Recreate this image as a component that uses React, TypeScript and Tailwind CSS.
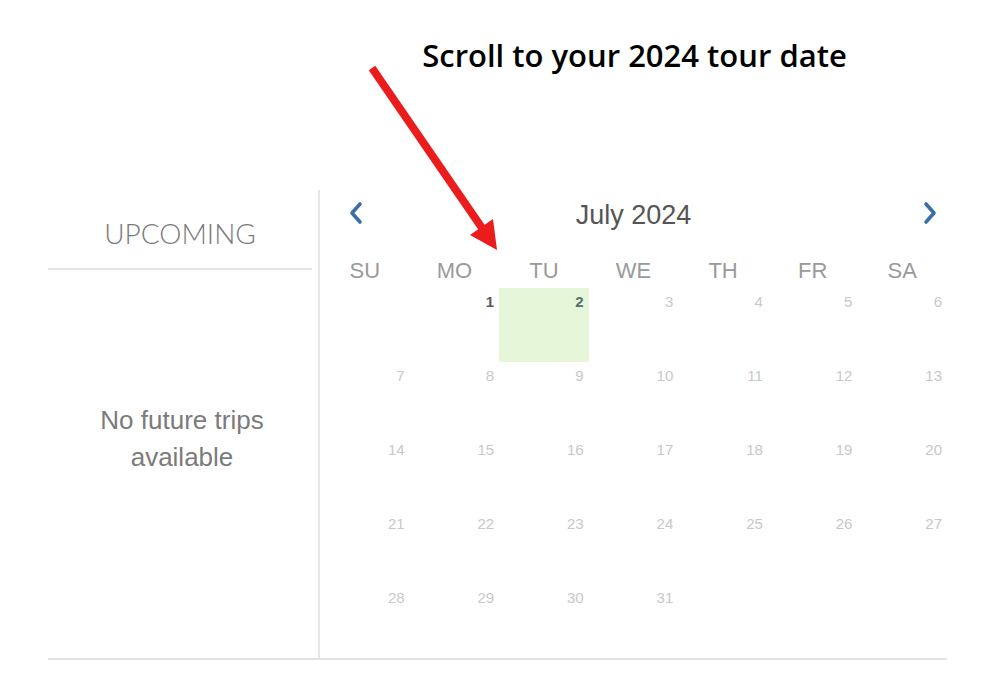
const rows: (number | null)[][] = [
  [null, 1, 2, 3, 4, 5, 6],
  [7, 8, 9, 10, 11, 12, 13],
  [14, 15, 16, 17, 18, 19, 20],
  [21, 22, 23, 24, 25, 26, 27],
  [28, 29, 30, 31, null, null, null],
];

const days = ["SU", "MO", "TU", "WE", "TH", "FR", "SA"];

const Chevron = ({ dir }: { dir: "left" | "right" }) => (
  <svg width="15" height="24" viewBox="0 0 15 24" fill="none">
    <path
      d={dir === "left" ? "M12 3 L4 12 L12 21" : "M3 3 L11 12 L3 21"}
      stroke="#3a6ea5"
      strokeWidth="3.6"
      strokeLinecap="round"
      strokeLinejoin="round"
    />
  </svg>
);

const App: React.FC = () => {
  return (
    <main className="relative w-[1000px] h-[682px] bg-white overflow-hidden font-['Liberation_Sans',Arial,sans-serif]">
      <div className="flex pt-[34px] pl-[320px] w-[949px]">
        <h1 className="flex-1 text-center font-['Open_Sans',sans-serif] font-semibold text-[31px] leading-[42px] text-black">
          Scroll to your 2024 tour date
        </h1>
      </div>

      <div className="flex ml-[48px] w-[899px] mt-[114px] border-b-2 border-[#e2e2e2]">
        {/* left column */}
        <div className="w-[272px] flex flex-col border-r-2 border-[#e6e6e6]">
          <div className="mr-[6px] h-[80px] pt-[8px] border-b-2 border-[#e4e4e4] flex items-center justify-center">
            <span className="font-['Lato',sans-serif] font-light text-[28px] text-[#7a7a7a]">UPCOMING</span>
          </div>
          <p className="pt-[132px] pr-[2px] text-center text-[26px] leading-[37px] text-[#7b7b7b]">
            No future trips
            <br />
            available
          </p>
        </div>

        {/* calendar */}
        <div className="flex-1">
          <div className="grid grid-cols-7 h-[46px] pt-[4px] items-center">
            <div className="pl-[28px] -mt-[4px]">
              <Chevron dir="left" />
            </div>
            <div className="col-span-5 text-center text-[27px] text-[#555]">July 2024</div>
            <div className="flex justify-end pr-[9px] -mt-[4px]">
              <Chevron dir="right" />
            </div>
          </div>
          <div className="grid grid-cols-7 mt-[18px] h-[32px] items-center">
            {days.map((d) => (
              <div key={d} className="text-center text-[22px] text-[#9a9a9a]">
                {d}
              </div>
            ))}
          </div>
          <div className="grid grid-cols-7 mt-[2px]">
            {rows.flat().map((n, i) => (
              <div
                key={i}
                className={`h-[74px] ${n === 2 ? "bg-[#e6f6d8] h-[73px]" : ""}`}
              >
                {n !== null && (
                  <div
                    className={`text-right pr-[5px] pt-[6px] text-[15px] leading-[16px] ${
                      n === 1 ? "text-[#5a5a5a] font-bold" : n === 2 ? "text-[#557070] font-bold" : "text-[#c8c8c8]"
                    }`}
                  >
                    {n}
                  </div>
                )}
              </div>
            ))}
          </div>
        </div>
      </div>

      <svg className="absolute inset-0 pointer-events-none" width="1000" height="682">
        <line x1="372" y1="68" x2="482" y2="228" stroke="#ea1c1c" strokeWidth="8" />
        <polygon points="497,250 493,219 470,235" fill="#ea1c1c" />
      </svg>
    </main>
  );
};

export default App;
